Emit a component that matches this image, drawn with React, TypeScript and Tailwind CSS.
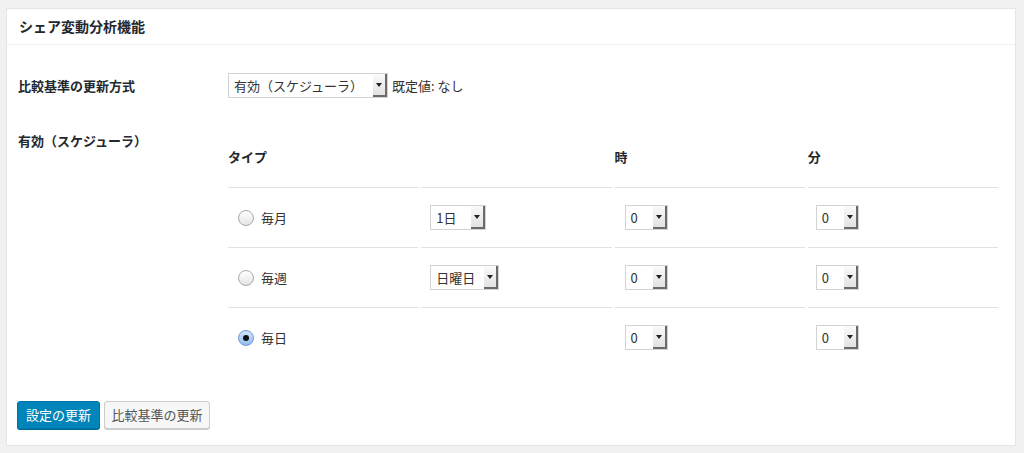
import React from "react";

const font = { fontFamily: '"Noto Sans CJK JP", "Noto Sans", sans-serif' };

function Select({ value, width }: { value: string; width: string }) {
  return (
    <div className={`inline-flex h-[25px] items-stretch border border-[#d3d3d3] bg-white ${width}`}>
      <span className="flex flex-1 items-center pl-[5px] text-[13px] text-[#333]">{value}</span>
      <span className="relative flex w-[14px] items-center justify-center border-r-[2px] border-b-[2px] border-[#6b6b6b] bg-gradient-to-b from-[#fafafa] to-[#e2e2e2]">
        <span className="block h-0 w-0 border-x-[3px] border-t-[4px] border-x-transparent border-t-[#222]" />
      </span>
    </div>
  );
}

function Radio({ checked }: { checked?: boolean }) {
  return checked ? (
    <span className="flex h-[16px] w-[16px] items-center justify-center rounded-full border border-[#6f9ad1] bg-gradient-to-b from-[#d4e6fb] to-[#8fbcef]">
      <span className="h-[6px] w-[6px] rounded-full bg-[#111]" />
    </span>
  ) : (
    <span className="block h-[16px] w-[16px] rounded-full border border-[#a9a9a9] bg-gradient-to-b from-[#ffffff] to-[#e4e4e4]" />
  );
}

const rows = [
  { label: "毎月", day: { value: "1日", width: "w-[56px]" }, checked: false },
  { label: "毎週", day: { value: "日曜日", width: "w-[69px]" }, checked: false },
  { label: "毎日", day: null, checked: true },
];

export default function App() {
  return (
    <div className="min-h-[453px] bg-[#f1f1f1] pt-[8px] pl-[6px]" style={font}>
      <div className="w-[1010px] border border-[#e5e5e5] bg-white">
        {/* Header */}
        <div className="flex h-[36px] items-center border-b border-[#eeeeee] px-[12px]">
          <h2 className="text-[14px] font-bold text-[#23282d]">シェア変動分析機能</h2>
        </div>

        <div className="px-[10px] pb-[16px]">
          {/* Row 1 */}
          <div className="mt-[28px] flex h-[25px] items-center">
            <div className="w-[211px] pl-[1px] text-[13px] font-bold text-[#23282d]">比較基準の更新方式</div>
            <Select value="有効（スケジューラ）" width="w-[160px]" />
            <span className="ml-[4px] text-[13px] text-[#333]">既定値: なし</span>
          </div>

          {/* Row 2 */}
          <div className="mt-[29px] flex">
            <div className="w-[211px] pt-[5px] pl-[1px] text-[13px] leading-[18px] font-bold text-[#23282d]">
              有効（スケジューラ）
            </div>
            <div className="grid w-[770px] grid-cols-4 gap-x-[3px]">
              <div className="flex h-[60px] items-center text-[13px] font-bold text-[#23282d]">タイプ</div>
              <div />
              <div className="flex h-[60px] items-center text-[13px] font-bold text-[#23282d]">時</div>
              <div className="flex h-[60px] items-center text-[13px] font-bold text-[#23282d]">分</div>
              {rows.map((r) => (
                <React.Fragment key={r.label}>
                  <div className="flex h-[60px] items-center gap-[7px] border-t border-[#e1e1e1] pl-[10px] text-[13px] text-[#333]">
                    <Radio checked={r.checked} />
                    {r.label}
                  </div>
                  <div className="flex h-[60px] items-center border-t border-[#e1e1e1] pl-[9px]">
                    {r.day && <Select value={r.day.value} width={r.day.width} />}
                  </div>
                  <div className="flex h-[60px] items-center border-t border-[#e1e1e1] pl-[10px]">
                    <Select value="0" width="w-[43px]" />
                  </div>
                  <div className="flex h-[60px] items-center border-t border-[#e1e1e1] pl-[8px]">
                    <Select value="0" width="w-[43px]" />
                  </div>
                </React.Fragment>
              ))}
            </div>
          </div>

          {/* Buttons */}
          <div className="mt-[34px] flex gap-[4px]">
            <button className="h-[28px] w-[83px] rounded-[3px] border border-[#0073aa] bg-[#0085ba] text-[13px] text-white shadow-[0_1px_0_#006799]">
              設定の更新
            </button>
            <button className="h-[28px] w-[106px] rounded-[3px] border border-[#cccccc] bg-[#f7f7f7] text-[13px] text-[#555] shadow-[0_1px_0_#cccccc]">
              比較基準の更新
            </button>
          </div>
        </div>
      </div>
    </div>
  );
}
